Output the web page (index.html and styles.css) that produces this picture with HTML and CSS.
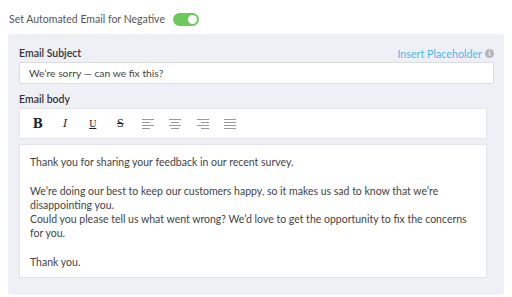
FILE: index.html
```html
<!DOCTYPE html>
<html lang="en">

<head>
    <meta charset="UTF-8">
    <meta name="viewport" content="width=device-width, initial-scale=1.0">
    <title>Automated Email</title>
    <link rel="stylesheet" href="styles.css">
</head>

<body>
    <div class="toggle-row">
        <span class="toggle-label">Set Automated Email for Negative</span>
        <span class="toggle on"><span class="knob"></span></span>
    </div>

    <div class="panel">
        <div class="field-head">
            <label for="subject">Email Subject</label>
            <a class="placeholder-link" href="#">Insert Placeholder <span class="info">i</span></a>
        </div>
        <input type="text" id="subject" class="subject" value="We’re sorry — can we fix this?">

        <div class="field-head">
            <label>Email body</label>
        </div>
        <div class="toolbar">
            <button class="tool tool-b">B</button>
            <button class="tool tool-i">I</button>
            <button class="tool tool-u">U</button>
            <button class="tool tool-s">S</button>
            <button class="tool">
                <svg width="12" height="10" viewBox="0 0 12 10"><path d="M0 0.5h12M0 3.5h8M0 6.5h12M0 9.5h8" stroke="#999" stroke-width="1"/></svg>
            </button>
            <button class="tool">
                <svg width="12" height="10" viewBox="0 0 12 10"><path d="M0 0.5h12M2 3.5h8M0 6.5h12M2 9.5h8" stroke="#999" stroke-width="1"/></svg>
            </button>
            <button class="tool">
                <svg width="12" height="10" viewBox="0 0 12 10"><path d="M0 0.5h12M4 3.5h8M0 6.5h12M4 9.5h8" stroke="#999" stroke-width="1"/></svg>
            </button>
            <button class="tool">
                <svg width="12" height="10" viewBox="0 0 12 10"><path d="M0 0.5h12M0 3.5h12M0 6.5h12M0 9.5h12" stroke="#999" stroke-width="1"/></svg>
            </button>
        </div>
        <div class="editor">
            <div>Thank you for sharing your feedback in our recent survey.</div>
            <div><br></div>
            <div>We’re doing our best to keep our customers happy, so it makes us sad to know that we’re<br>disappointing you.</div>
            <div>Could you please tell us what went wrong? We’d love to get the opportunity to fix the concerns<br>for you.</div>
            <div><br></div>
            <div>Thank you.</div>
        </div>
    </div>
</body>

</html>
```

FILE: styles.css
```css
body {
    font-family: Lato, Arial, sans-serif;
    font-size: 10.5px;
    color: #444;
    margin: 0;
    padding: 0;
    background-color: #fff;
}

.toggle-row {
    display: flex;
    align-items: center;
    gap: 8px;
    height: 22px;
    padding: 8px 9px 4px;
}

.toggle-label {
    color: #555;
    font-size: 10.5px;
}

.toggle {
    display: inline-block;
    position: relative;
    width: 26px;
    height: 13px;
    border-radius: 7px;
    background-color: #6cc95c;
}

.toggle .knob {
    position: absolute;
    top: 2px;
    right: 2px;
    width: 9px;
    height: 9px;
    border-radius: 50%;
    background-color: #fff;
}

.panel {
    margin: 0 8px 0 8px;
    width: 496px;
    height: 261px;
    box-sizing: border-box;
    background-color: #eff0f6;
    border-radius: 4px;
    padding: 10px 10px 0 11px;
}

.field-head {
    display: flex;
    justify-content: space-between;
    align-items: center;
    height: 18px;
}

.field-head label {
    font-weight: 600;
    color: #333;
    font-size: 10.5px;
}

.placeholder-link {
    color: #4fb5e6;
    text-decoration: none;
    display: flex;
    align-items: center;
    gap: 3px;
    font-size: 10.7px;
}

.info {
    display: inline-block;
    width: 9px;
    height: 9px;
    border-radius: 50%;
    background-color: #b5b5b5;
    color: #fff;
    font-size: 7px;
    line-height: 9px;
    text-align: center;
    font-weight: bold;
}

.subject {
    display: block;
    width: 475px;
    height: 22px;
    box-sizing: border-box;
    margin: 0 0 6px;
    padding: 0 9px;
    border: 1px solid #dcdce0;
    border-radius: 2px;
    font-family: inherit;
    font-size: 10.3px;
    color: #444;
    background-color: #fff;
}

.toolbar {
    display: flex;
    align-items: center;
    width: 468px;
    height: 31px;
    box-sizing: border-box;
    margin-top: 0;
    padding-left: 4px;
    background-color: #fff;
    border: 1px solid #e4e4ea;
}

.tool {
    width: 27.5px;
    height: 20px;
    padding: 0;
    border: none;
    background: none;
    display: flex;
    align-items: center;
    justify-content: center;
    font-family: "DejaVu Serif", serif;
    font-size: 11px;
    color: #222;
}

.tool-b {
    font-weight: bold;
    font-size: 12px;
}

.tool-i {
    font-style: italic;
}

.tool-u {
    text-decoration: underline;
    font-family: "Liberation Serif", serif;
    font-size: 10px;
}

.tool-s {
    text-decoration: line-through;
    font-family: "Liberation Serif", serif;
    font-size: 12px;
}

.editor {
    width: 468px;
    height: 134px;
    box-sizing: border-box;
    margin-top: 5px;
    padding: 10px 10px;
    background-color: #fff;
    border: 1px solid #e4e4ea;
    line-height: 14.3px;
    color: #444;
    white-space: nowrap;
}
```
